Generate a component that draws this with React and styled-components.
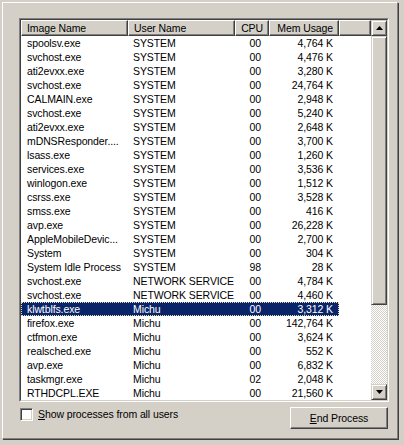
import styled, { createGlobalStyle } from 'styled-components';

const GlobalStyle = createGlobalStyle`
  html, body {
    margin: 0;
    padding: 0;
    background: #d4d0c8;
  }
  body {
    font-family: "Liberation Sans", Arial, sans-serif;
    font-size: 10.5px;
    letter-spacing: -0.1px;
    color: #000;
  }
`;

const Page = styled.div`
  width: 404px;
  height: 445px;
  box-sizing: border-box;
  padding: 2px 0 0 2px;
`;

// tab page border
const Frame = styled.div`
  width: 396px;
  height: 437px;
  box-sizing: border-box;
  border-top: 1px solid #fff;
  border-left: 1px solid #fff;
  border-right: 1px solid #808080;
  border-bottom: 1px solid #808080;
  box-shadow: 1px 1px 0 #404040;
  padding: 15px 0 0 16px;
  display: flex;
  flex-direction: column;
`;

const ListBox = styled.div`
  width: 370px;
  height: 384px;
  box-sizing: border-box;
  border-top: 1px solid #808080;
  border-left: 1px solid #808080;
  border-right: 1px solid #fff;
  border-bottom: 1px solid #fff;
`;

const Well = styled.div`
  height: 100%;
  box-sizing: border-box;
  border-top: 1px solid #404040;
  border-left: 1px solid #404040;
  border-right: 1px solid #d4d0c8;
  border-bottom: 1px solid #d4d0c8;
  display: flex;
  background: #fff;
`;

const Content = styled.div`
  flex: 1;
  display: flex;
  flex-direction: column;
  overflow: hidden;
`;

const HeaderRow = styled.div`
  display: flex;
  height: 16px;
`;

const HeaderCell = styled.div`
  width: ${p => p.$w}px;
  flex: ${p => (p.$w ? 'none' : '1')};
  box-sizing: border-box;
  height: 16px;
  line-height: 14px;
  background: #d4d0c8;
  border-top: 1px solid #fff;
  border-left: 1px solid #fff;
  border-right: 1px solid #404040;
  border-bottom: 1px solid #404040;
  box-shadow: inset -1px -1px 0 #808080;
  text-align: ${p => p.$align || 'left'};
  padding: ${p => (p.$align === 'right' ? '0 5px 0 0' : '0 0 0 5px')};
  white-space: nowrap;
  overflow: hidden;
`;

const Row = styled.div`
  display: flex;
  align-self: flex-start;
  height: 14px;
  line-height: 14px;
  background: ${p => (p.$selected ? '#0a246a' : 'transparent')};
  color: ${p => (p.$selected ? '#fff' : '#000')};
  outline: ${p => (p.$selected ? '1px dotted #e8e0a0' : 'none')};
  outline-offset: -1px;
`;

const Cell = styled.div`
  width: ${p => p.$w}px;
  box-sizing: border-box;
  text-align: ${p => p.$align || 'left'};
  padding: ${p => p.$pad};
  white-space: nowrap;
  overflow: hidden;
`;

const ScrollBar = styled.div`
  width: 16px;
  display: flex;
  flex-direction: column;
`;

const ScrollButton = styled.div`
  width: 16px;
  height: 16px;
  box-sizing: border-box;
  background: #d4d0c8;
  border-top: 1px solid #d4d0c8;
  border-left: 1px solid #d4d0c8;
  border-right: 1px solid #404040;
  border-bottom: 1px solid #404040;
  box-shadow: inset 1px 1px 0 #fff, inset -1px -1px 0 #808080;
  display: flex;
  align-items: center;
  justify-content: center;
`;

const Thumb = styled(ScrollButton)`
  height: ${p => p.$h}px;
`;

const Track = styled.div`
  flex: 1;
  background-color: #d4d0c8;
  background-image: conic-gradient(#fff 25%, #d4d0c8 0 50%, #fff 0 75%, #d4d0c8 0);
  background-size: 2px 2px;
`;

const Footer = styled.div`
  width: 370px;
  box-sizing: border-box;
  margin-top: 5px;
  padding: 0 1px;
  display: flex;
  justify-content: space-between;
  align-items: flex-start;
`;

const CheckLabel = styled.label`
  display: flex;
  align-items: center;
  gap: 5px;
  margin-top: 1px;
  line-height: 13px;
`;

const CheckBox = styled.span`
  width: 13px;
  height: 13px;
  box-sizing: border-box;
  background: #fff;
  border-top: 1px solid #808080;
  border-left: 1px solid #808080;
  border-right: 1px solid #fff;
  border-bottom: 1px solid #fff;
  box-shadow: inset 1px 1px 0 #404040, inset -1px -1px 0 #d4d0c8;
`;

const Button = styled.button`
  width: 98px;
  height: 22px;
  box-sizing: border-box;
  background: #d4d0c8;
  font: inherit;
  letter-spacing: inherit;
  color: #000;
  padding: 0;
  border-top: 1px solid #fff;
  border-left: 1px solid #fff;
  border-right: 1px solid #404040;
  border-bottom: 1px solid #404040;
  box-shadow: inset -1px -1px 0 #808080;
`;

const Accel = styled.span`
  text-decoration: underline;
`;

const Arrow = ({ down }) => (
  <svg width="7" height="4" viewBox="0 0 7 4">
    <polygon points={down ? '0,0 7,0 3.5,4' : '3.5,0 7,4 0,4'} fill="#000" />
  </svg>
);

const cols = [
  { key: 'name', title: 'Image Name', w: 107, pad: '0 0 0 6px' },
  { key: 'user', title: 'User Name', w: 107, pad: '0 0 0 5px' },
  { key: 'cpu', title: 'CPU', w: 34, align: 'right', pad: '0 8px 0 0' },
  { key: 'mem', title: 'Mem Usage', w: 70, align: 'right', pad: '0 6px 0 0' },
];

const procs = [
  ['spoolsv.exe', 'SYSTEM', '00', '4,764 K'],
  ['svchost.exe', 'SYSTEM', '00', '4,476 K'],
  ['ati2evxx.exe', 'SYSTEM', '00', '3,280 K'],
  ['svchost.exe', 'SYSTEM', '00', '24,764 K'],
  ['CALMAIN.exe', 'SYSTEM', '00', '2,948 K'],
  ['svchost.exe', 'SYSTEM', '00', '5,240 K'],
  ['ati2evxx.exe', 'SYSTEM', '00', '2,648 K'],
  ['mDNSResponder....', 'SYSTEM', '00', '3,700 K'],
  ['lsass.exe', 'SYSTEM', '00', '1,260 K'],
  ['services.exe', 'SYSTEM', '00', '3,536 K'],
  ['winlogon.exe', 'SYSTEM', '00', '1,512 K'],
  ['csrss.exe', 'SYSTEM', '00', '3,528 K'],
  ['smss.exe', 'SYSTEM', '00', '416 K'],
  ['avp.exe', 'SYSTEM', '00', '26,228 K'],
  ['AppleMobileDevic...', 'SYSTEM', '00', '2,700 K'],
  ['System', 'SYSTEM', '00', '304 K'],
  ['System Idle Process', 'SYSTEM', '98', '28 K'],
  ['svchost.exe', 'NETWORK SERVICE', '00', '4,784 K'],
  ['svchost.exe', 'NETWORK SERVICE', '00', '4,460 K'],
  ['klwtblfs.exe', 'Michu', '00', '3,312 K'],
  ['firefox.exe', 'Michu', '00', '142,764 K'],
  ['ctfmon.exe', 'Michu', '00', '3,624 K'],
  ['realsched.exe', 'Michu', '00', '552 K'],
  ['avp.exe', 'Michu', '00', '6,832 K'],
  ['taskmgr.exe', 'Michu', '02', '2,048 K'],
  ['RTHDCPL.EXE', 'Michu', '00', '21,560 K'],
];

const selected = 19;

export default function App() {
  return (
    <>
      <GlobalStyle />
      <Page>
        <Frame>
          <ListBox>
            <Well>
              <Content>
                <HeaderRow>
                  {cols.map(c => (
                    <HeaderCell key={c.key} $w={c.w} $align={c.align}>
                      {c.title}
                    </HeaderCell>
                  ))}
                  <HeaderCell />
                </HeaderRow>
                {procs.map((p, i) => (
                  <Row key={i} $selected={i === selected}>
                    {cols.map((c, j) => (
                      <Cell key={c.key} $w={c.w} $align={c.align} $pad={c.pad}>
                        {p[j]}
                      </Cell>
                    ))}
                  </Row>
                ))}
              </Content>
              <ScrollBar>
                <ScrollButton>
                  <Arrow />
                </ScrollButton>
                <Thumb $h={269} />
                <Track />
                <ScrollButton>
                  <Arrow down />
                </ScrollButton>
              </ScrollBar>
            </Well>
          </ListBox>
          <Footer>
            <CheckLabel>
              <CheckBox />
              <span>
                <Accel>S</Accel>how processes from all users
              </span>
            </CheckLabel>
            <Button>
              <Accel>E</Accel>nd Process
            </Button>
          </Footer>
        </Frame>
      </Page>
    </>
  );
}
